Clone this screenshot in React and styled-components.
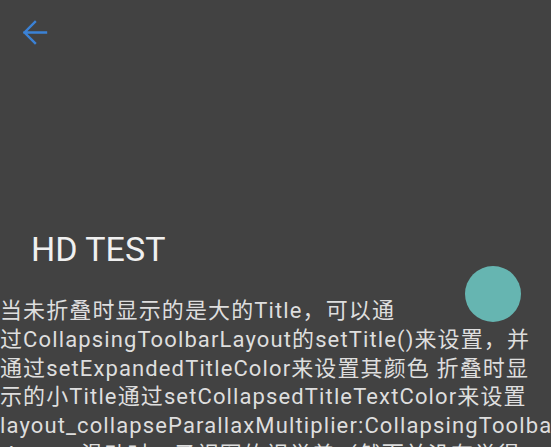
import React from "react";
import styled, { createGlobalStyle } from "styled-components";

const Global = createGlobalStyle`
  html, body {
    margin: 0;
    padding: 0;
    background: #424242;
    overflow: hidden;
  }
  body {
    font-family: Roboto, "Noto Sans CJK SC", sans-serif;
  }
`;

const Page = styled.div`
  position: relative;
  width: 551px;
  height: 447px;
  background: #424242;
  overflow: hidden;
`;

const Header = styled.header`
  height: 297px;
  display: flex;
  flex-direction: column;
  justify-content: space-between;
  box-sizing: border-box;
  padding-bottom: 28px;
`;

const Toolbar = styled.div`
  height: 64px;
  display: flex;
  align-items: center;
  padding-left: 16px;
`;

const BackButton = styled.button`
  width: 36px;
  height: 36px;
  padding: 0;
  border: none;
  background: transparent;
  display: flex;
  align-items: center;
  justify-content: center;
  margin-top: 2px;
`;

const Title = styled.h1`
  margin: 0;
  padding-left: 31px;
  font-family: Roboto, sans-serif;
  font-weight: 400;
  font-size: 34px;
  line-height: 40px;
  color: #f0f0f0;
`;

const Body = styled.div`
  color: #dedede;
  font-family: Roboto, "Noto Sans CJK SC", sans-serif;
  font-size: 22px;
  line-height: 28.75px;
  letter-spacing: 1.12px;
`;

const Line = styled.div`
  white-space: nowrap;
`;

const Fab = styled.div`
  position: absolute;
  left: 465px;
  top: 266px;
  width: 56px;
  height: 56px;
  border-radius: 50%;
  background: #66b5b1;
`;

const lines = [
  "当未折叠时显示的是大的Title，可以通",
  "过CollapsingToolbarLayout的setTitle()来设置，并",
  "通过setExpandedTitleColor来设置其颜色 折叠时显",
  "示的小Title通过setCollapsedTitleTextColor来设置",
  "layout_collapseParallaxMultiplier:CollapsingToolbar",
  "rLayout滑动时，子视图的视觉差（然而并没有觉得",
];

export default function App() {
  return (
    <Page>
      <Global />
      <Header>
        <Toolbar>
          <BackButton aria-label="back">
            <svg width="28" height="28" viewBox="0 0 28 28" fill="none">
              <path
                d="M26 13.5H4.5M15 3L4.5 13.5L15 24"
                stroke="#3b82d6"
                strokeWidth="2.4"
                strokeLinecap="square"
              />
            </svg>
          </BackButton>
        </Toolbar>
        <Title>HD TEST</Title>
      </Header>
      <Body>
        {lines.map((l, i) => (
          <Line key={i}>{l}</Line>
        ))}
      </Body>
      <Fab />
    </Page>
  );
}
